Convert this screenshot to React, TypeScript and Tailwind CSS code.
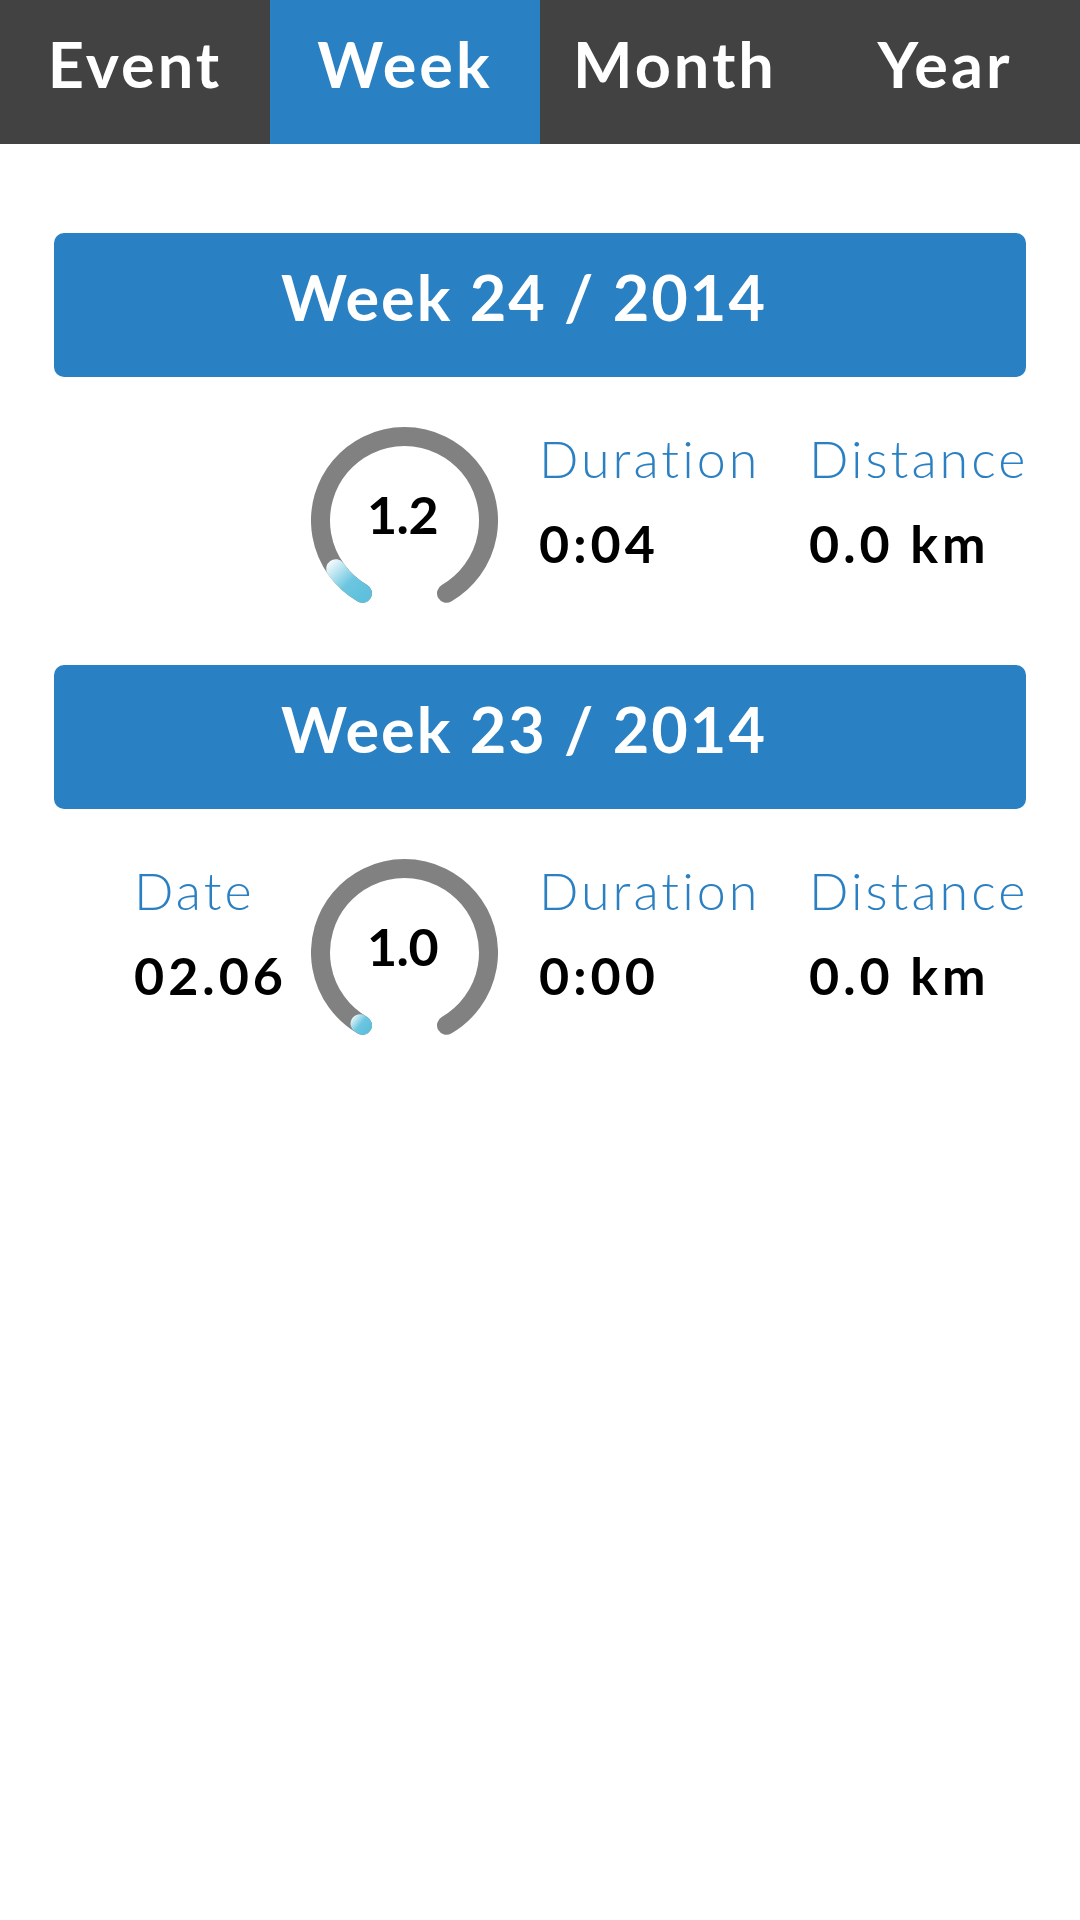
const tabs = ['Event', 'Week', 'Month', 'Year'];

const weeks = [
  { title: 'Week 24 / 2014', score: '1.2', progress: 25, date: null, duration: '0:04', distance: '0.0 km' },
  { title: 'Week 23 / 2014', score: '1.0', progress: 2, date: '02.06', duration: '0:00', distance: '0.0 km' },
];

const font = { fontFamily: 'Lato, "Open Sans", sans-serif' };

// point on the ring, angle in degrees, screen coords (clockwise from +x)
function pt(deg: number, r = 84, c = 93.5) {
  const a = (deg * Math.PI) / 180;
  return [c + r * Math.cos(a), c + r * Math.sin(a)];
}

function Gauge({ score, progress, id }: { score: string; progress: number; id: string }) {
  const [sx, sy] = pt(120);
  const [ex, ey] = pt(60);
  const [px, py] = pt(120 + progress);
  const [gx, gy] = pt(120 + progress + 8, 84);
  return (
    <div className="relative w-[187px] h-[187px] shrink-0">
      <svg width="187" height="187" viewBox="0 0 187 187">
        <defs>
          <linearGradient id={id} gradientUnits="userSpaceOnUse" x1={sx + 6} y1={sy + 6} x2={gx} y2={gy}>
            <stop offset="0" stopColor="#5cbfdc" />
            <stop offset="0.45" stopColor="#6cc6e0" />
            <stop offset="1" stopColor="#ffffff" />
          </linearGradient>
        </defs>
        <path
          d={`M ${sx} ${sy} A 84 84 0 1 1 ${ex} ${ey}`}
          fill="none"
          stroke="#818181"
          strokeWidth="19"
          strokeLinecap="round"
        />
        <path
          d={`M ${sx} ${sy} A 84 84 0 0 1 ${px} ${py}`}
          fill="none"
          stroke={`url(#${id})`}
          strokeWidth="19"
          strokeLinecap="round"
        />
      </svg>
      <div className="absolute inset-0 flex justify-center pt-[57px] pr-[4px]">
        <span className="text-[52px] leading-[60px] font-bold text-black tracking-[-0.5px]">{score}</span>
      </div>
    </div>
  );
}

function Stat({ label, value }: { label: string; value: string }) {
  return (
    <div className="pt-[51px]">
      <div className="text-[52px] leading-[60px] font-light text-[#2a80c2] tracking-[3px]">{label}</div>
      <div className="mt-[25px] text-[52px] leading-[60px] font-bold text-black tracking-[4px] whitespace-nowrap">
        {value}
      </div>
    </div>
  );
}

export default function App() {
  return (
    <div className="w-[1080px] h-[1920px] bg-white overflow-hidden" style={font}>
      {/* Tabs */}
      <div className="flex h-[144px] bg-[#424242]">
        {tabs.map((t) => (
          <div
            key={t}
            className={`flex-1 text-center text-white font-bold text-[63px] leading-[128px] pb-[16px] tracking-[3px] ${
              t === 'Week' ? 'bg-[#2980c2]' : ''
            }`}
          >
            {t}
          </div>
        ))}
      </div>

      <div className="pt-[89px]">
        {weeks.map((w, i) => (
          <div key={w.title}>
            {/* Week header */}
            <div className="mx-[54px] h-[144px] rounded-[10px] bg-[#2980c2] text-center text-white font-bold text-[63px] leading-[128px] pb-[16px] pr-[32px] tracking-[2px]">
              {w.title}
            </div>

            {/* Stats row */}
            <div className="flex h-[288px]">
              <div className="w-[311px] pl-[134px] shrink-0">
                {w.date && <Stat label="Date" value={w.date} />}
              </div>
              <div className="pt-[50px]">
                <Gauge score={w.score} progress={w.progress} id={`g${i}`} />
              </div>
              <div className="w-[311px] pl-[41px] shrink-0">
                <Stat label="Duration" value={w.duration} />
              </div>
              <div className="flex-1">
                <Stat label="Distance" value={w.distance} />
              </div>
            </div>
          </div>
        ))}
      </div>
    </div>
  );
}
